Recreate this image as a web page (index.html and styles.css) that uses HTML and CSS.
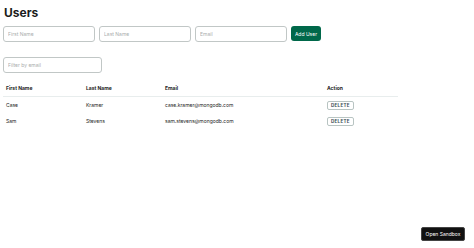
FILE: index.html
```html
<!DOCTYPE html>
<html lang="en">
<head>
  <meta charset="UTF-8">
  <title>Users</title>
  <link rel="stylesheet" href="styles.css">
</head>
<body>
  <h1>Users</h1>
  <form class="add-form">
    <input type="text" placeholder="First Name">
    <input type="text" placeholder="Last Name">
    <input type="text" placeholder="Email">
    <button type="button" class="btn-add">Add User</button>
  </form>

  <input type="text" class="filter" placeholder="Filter by email">

  <table class="users">
    <thead>
      <tr>
        <th class="c1">First Name</th>
        <th class="c2">Last Name</th>
        <th class="c3">Email</th>
        <th class="c4">Action</th>
      </tr>
    </thead>
    <tbody>
      <tr>
        <td>Case</td>
        <td>Kramer</td>
        <td>case.kramer@mongodb.com</td>
        <td><button class="btn-del">DELETE</button></td>
      </tr>
      <tr>
        <td>Sam</td>
        <td>Stevens</td>
        <td>sam.stevens@mongodb.com</td>
        <td><button class="btn-del">DELETE</button></td>
      </tr>
    </tbody>
  </table>

  <button class="sandbox">Open Sandbox</button>
</body>
</html>
```

FILE: styles.css
```css
body { font-family: Inter, "Liberation Sans", sans-serif; margin: 0; padding: 0 3px; color: #1c1c1c; background: #fff; height: 248px; position: relative; }
h1 { font-size: 12px; font-weight: 700; margin: 0; padding: 5px 0 0 1px; height: 21px; box-sizing: border-box; }
input { font-family: inherit; font-size: 5px; height: 16px; box-sizing: border-box; border: 1px solid #c1c7c6; border-radius: 3px; padding: 0 4px; color: #1c1c1c; background: #fff; }
input::placeholder { color: #a9adad; }
.add-form { display: flex; gap: 4px; margin: 5px 0 0; }
.add-form input { width: 92px; }
.btn-add { font-family: inherit; font-size: 5px; height: 15px; width: 30px; padding: 0; border: none; border-radius: 3px; background: #00684a; color: #fff; }
.filter { display: block; width: 99px; margin-top: 15px; }
.users { border-collapse: collapse; margin-top: 8px; width: 395px; font-size: 5px; }
.users th { font-weight: 700; text-align: left; padding: 3px 3px 4px; height: 8px; border-bottom: 1px solid #e8eded; }
.users td { padding: 0 3px; height: 16px; vertical-align: middle; }
.c1 { width: 74px; }
.c2 { width: 73px; }
.c3 { width: 156px; }
.btn-del { font-family: inherit; font-size: 4.5px; font-weight: 700; letter-spacing: 0.3px; padding: 1px 3px; background: #fff; border: 1px solid #b8c4c2; border-radius: 2px; color: #3d4f58; }
.sandbox { position: absolute; right: 9px; bottom: 7px; font-family: inherit; font-size: 5px; background: #111; color: #fff; border: 1px solid #444; border-radius: 2px; width: 44px; height: 14px; padding: 0; }
```
